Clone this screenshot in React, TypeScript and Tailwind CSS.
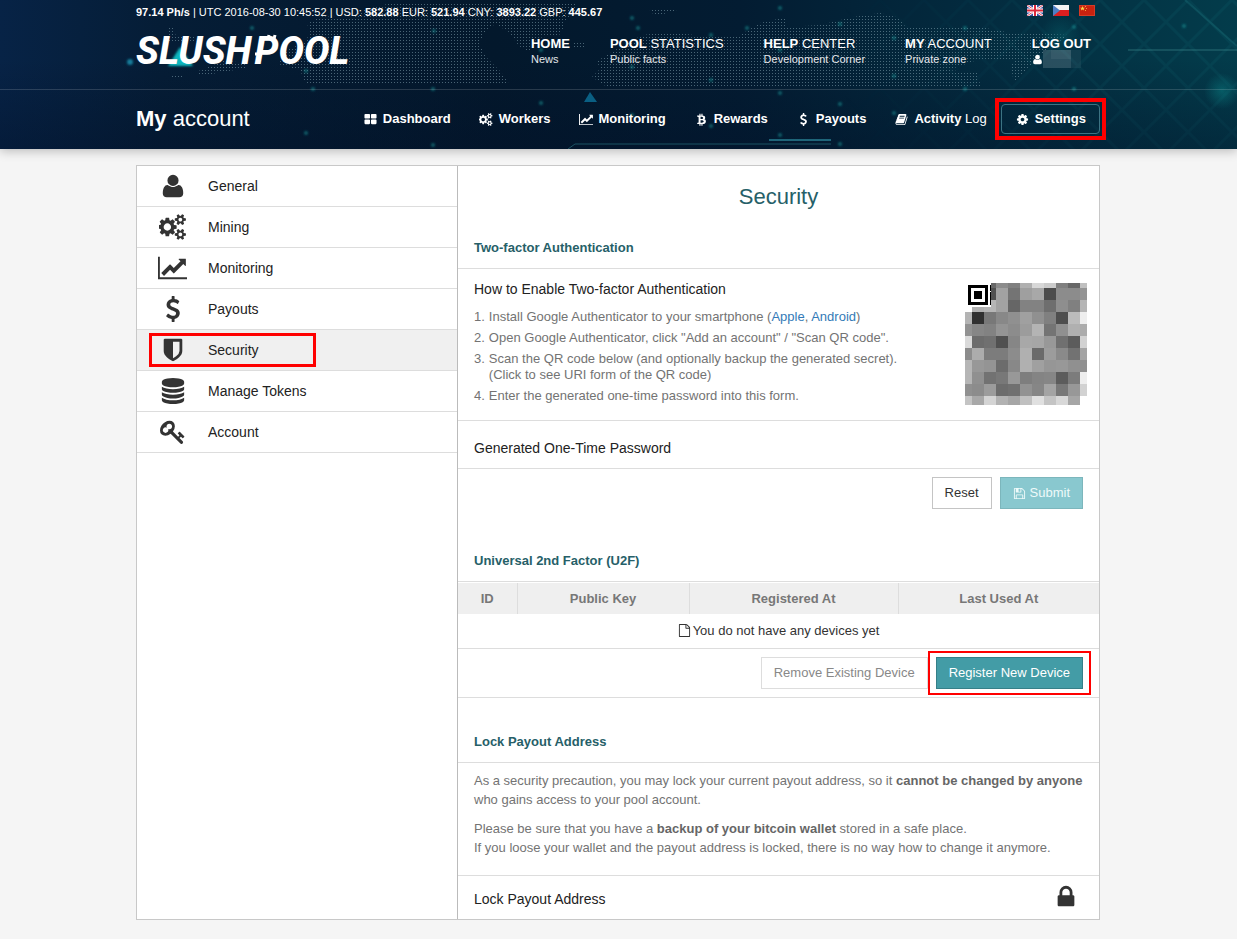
import React from 'react';

interface Glyph {
  width: number;
  d: string;
}

const glyphs: Record<string, Glyph> = {
  user: {
    width: 1792,
    d: 'M1600 1405q0 120-73 189.5t-194 69.5h-874q-121 0-194-69.5t-73-189.5q0-53 3.5-103.5t14-109 26.5-108.5 43-97.5 62-81 85.5-53.5 111.5-20q9 0 42 21.5t74.5 48 108 48 133.5 21.5 133.5-21.5 108-48 74.5-48 42-21.5q61 0 111.5 20t85.5 53.5 62 81 43 97.5 26.5 108.5 14 109 3.5 103.5zm-320-893q0 159-112.5 271.5t-271.5 112.5-271.5-112.5-112.5-271.5 112.5-271.5 271.5-112.5 271.5 112.5 112.5 271.5z',
  },
  cog: {
    width: 1792,
    d: 'M1152 896q0-106-75-181t-181-75-181 75-75 181 75 181 181 75 181-75 75-181zm512-109v222q0 12-8 23t-20 13l-185 28q-19 54-39 91 35 50 107 138 10 12 10 25t-9 23q-27 37-99 108t-94 71q-12 0-26-9l-138-108q-44 23-91 38-16 136-29 186-7 28-36 28h-222q-14 0-24.5-8.5t-11.5-21.5l-28-184q-49-16-90-37l-141 107q-10 9-25 9-14 0-25-11-126-114-165-168-7-10-7-23 0-12 8-23 15-21 51-66.5t54-70.5q-27-50-41-99l-183-27q-13-2-21-12.5t-8-23.5v-222q0-12 8-23t19-13l186-28q14-46 39-92-40-57-107-138-10-12-10-24 0-10 9-23 26-36 98.5-107.5t94.5-71.5q13 0 26 10l138 107q44-23 91-38 16-136 29-186 7-28 36-28h222q14 0 24.5 8.5t11.5 21.5l28 184q49 16 90 37l142-107q9-9 24-9 13 0 25 10 129 119 165 170 7 8 7 22 0 12-8 23-15 21-51 66.5t-54 70.5q26 50 41 98l183 28q13 2 21 12.5t8 23.5z',
  },
  cogs: {
    width: 1920,
    d: 'M832 896q0-106-75-181t-181-75-181 75-75 181 75 181 181 75 181-75 75-181zm768 512q0-52-38-90t-90-38-90 38-38 90q0 53 37.5 90.5t90.5 37.5 90.5-37.5 37.5-90.5zm0-1024q0-52-38-90t-90-38-90 38-38 90q0 53 37.5 90.5t90.5 37.5 90.5-37.5 37.5-90.5zm-384 421v185q0 10-7 19.5t-16 10.5l-155 24q-11 35-32 76 34 48 90 115 7 11 7 20 0 12-7 19-23 30-82.5 89.5t-78.5 59.5q-11 0-21-7l-115-90q-37 19-77 31-11 108-23 155-7 24-30 24h-186q-11 0-20-7.5t-10-17.5l-23-153q-34-10-75-31l-118 89q-7 7-20 7-11 0-21-8-144-133-144-160 0-9 7-19 10-14 41-53t47-61q-23-44-35-82l-152-24q-10-1-17-9.5t-7-19.5v-185q0-10 7-19.5t16-10.5l155-24q11-35 32-76-34-48-90-115-7-11-7-20 0-12 7-20 22-30 82-89t79-59q11 0 21 7l115 90q34-18 77-32 11-108 23-154 7-24 30-24h186q11 0 20 7.5t10 17.5l23 153q34 10 75 31l118-89q8-7 20-7 11 0 21 8 144 133 144 160 0 8-7 19-12 16-42 54t-45 60q23 48 34 82l152 23q10 2 17 10.5t7 19.5zm640 533v140q0 16-149 31-12 27-30 52 51 113 51 138 0 4-4 7-122 71-124 71-8 0-46-47t-52-68q-20 2-30 2t-30-2q-14 21-52 68t-46 47q-2 0-124-71-4-3-4-7 0-25 51-138-18-25-30-52-149-15-149-31v-140q0-16 149-31 13-29 30-52-51-113-51-138 0-4 4-7 4-2 35-20t59-34 30-16q8 0 46 46.5t52 67.5q20-2 30-2t30 2q51-71 92-112l6-2q4 0 124 70 4 3 4 7 0 25-51 138 17 23 30 52 149 15 149 31zm0-1024v140q0 16-149 31-12 27-30 52 51 113 51 138 0 4-4 7-122 71-124 71-8 0-46-47t-52-68q-20 2-30 2t-30-2q-14 21-52 68t-46 47q-2 0-124-71-4-3-4-7 0-25 51-138-18-25-30-52-149-15-149-31v-140q0-16 149-31 13-29 30-52-51-113-51-138 0-4 4-7 4-2 35-20t59-34 30-16q8 0 46 46.5t52 67.5q20-2 30-2t30 2q51-71 92-112l6-2q4 0 124 70 4 3 4 7 0 25-51 138 17 23 30 52 149 15 149 31z',
  },
  chart: {
    width: 2048,
    d: 'M2048 1536v128h-2048v-1536h128v1408h1920zm-128-1248v435q0 21-19.5 29.5t-35.5-7.5l-121-121-633 633q-10 10-23 10t-23-10l-233-233-416 416-192-192 585-585q10-10 23-10t23 10l233 233 464-464-121-121q-16-16-7.5-35.5t29.5-19.5h435q14 0 23 9t9 23z',
  },
  usd: {
    width: 1792,
    d: 'M1362 1185q0 153-99.5 263.5t-258.5 136.5v175q0 14-9 23t-23 9h-135q-13 0-22.5-9.5t-9.5-22.5v-175q-66-9-127.5-31t-101.5-44.5-74-48-46.5-37.5-17.5-18q-17-21-2-41l103-135q7-10 23-12 15-2 24 9l2 2q113 99 243 125 37 8 74 8 81 0 142.5-43t61.5-122q0-28-15-53t-33.5-42-58.5-37.5-66-32-80-32.5q-39-16-61.5-25t-61.5-26.5-62.5-31-56.5-35.5-53.5-42.5-43.5-49-35.5-58-21-66.5-8.5-78q0-138 98-242t255-134v-180q0-13 9.5-22.5t22.5-9.5h135q14 0 23 9t9 23v176q57 6 110.5 23t87 33.5 63.5 37.5 39 29 15 14q17 18 5 38l-81 146q-8 15-23 16-14 3-27-7-3-3-14.5-12t-39-26.5-58.5-32-74.5-26-85.5-11.5q-95 0-155 43t-60 111q0 26 8.5 48t29.5 41.5 39.5 33 56 31 60.5 27 70 27.5q53 20 81 31.5t76 35 75.5 42.5 62 50 53 63.5 31.5 76.5 13 94z',
  },
  shield: {
    width: 1792,
    d: 'M1344 960v-640h-448v1137q119-63 213-137 235-184 235-360zm192-768v768q0 86-33.5 170.5t-83 150-118 127.5-126.5 103-121 77.5-89.5 49.5-42.5 20q-12 6-26 6t-26-6q-16-7-42.5-20t-89.5-49.5-121-77.5-126.5-103-118-127.5-83-150-33.5-170.5v-768q0-26 19-45t45-19h1152q26 0 45 19t19 45z',
  },
  database: {
    width: 1792,
    d: 'M896 768q237 0 443-43t325-127v170q0 69-103 128t-280 93.5-385 34.5-385-34.5-280-93.5-103-128v-170q119 84 325 127t443 43zm0 768q237 0 443-43t325-127v170q0 69-103 128t-280 93.5-385 34.5-385-34.5-280-93.5-103-128v-170q119 84 325 127t443 43zm0-384q237 0 443-43t325-127v170q0 69-103 128t-280 93.5-385 34.5-385-34.5-280-93.5-103-128v-170q119 84 325 127t443 43zm0-1152q208 0 385 34.5t280 93.5 103 128v128q0 69-103 128t-280 93.5-385 34.5-385-34.5-280-93.5-103-128v-128q0-69 103-128t280-93.5 385-34.5z',
  },
  key: {
    width: 1792,
    d: 'M832 512q0-80-56-136t-136-56-136 56-56 136q0 42 19 83-41-19-83-19-80 0-136 56t-56 136 56 136 136 56 136-56 56-136q0-42-19-83 41 19 83 19 80 0 136-56t56-136zm851 704q0 17-49 66t-66 49q-9 0-28.5-16t-36.5-33-38.5-40-24.5-26l-96 96 220 220q28 28 28 68 0 42-39 81t-81 39q-40 0-68-28l-671-671q-176 131-365 131-163 0-265.5-102.5t-102.5-265.5q0-160 95-313t248-248 313-95q163 0 265.5 102.5t102.5 265.5q0 189-131 365l355 355 96-96q-3-3-26-24.5t-40-38.5-33-36.5-16-28.5q0-17 49-66t66-49q13 0 23 10 6 6 46 44.5t82 79.5 86.5 86 73 78 28.5 41z',
  },
  lock: {
    width: 1792,
    d: 'M640 768h512v-192q0-106-75-181t-181-75-181 75-75 181v192zm832 96v576q0 40-28 68t-68 28h-960q-40 0-68-28t-28-68v-576q0-40 28-68t68-28h32v-192q0-184 132-316t316-132 316 132 132 316v192h32q40 0 68 28t28 68z',
  },
  tiles: {
    width: 1792,
    d: 'M832 1024v384q0 52-38 90t-90 38h-512q-52 0-90-38t-38-90v-384q0-52 38-90t90-38h512q52 0 90 38t38 90zm0-768v384q0 52-38 90t-90 38h-512q-52 0-90-38t-38-90v-384q0-52 38-90t90-38h512q52 0 90 38t38 90zm896 768v384q0 52-38 90t-90 38h-512q-52 0-90-38t-38-90v-384q0-52 38-90t90-38h512q52 0 90 38t38 90zm0-768v384q0 52-38 90t-90 38h-512q-52 0-90-38t-38-90v-384q0-52 38-90t90-38h512q52 0 90 38t38 90z',
  },
  book: {
    width: 1792,
    d: 'M1703 478q40 57 18 129l-275 906q-19 64-76.5 107.5t-122.5 43.5h-923q-77 0-148.5-53.5t-99.5-131.5q-24-67-2-127 0-4 3-27t4-37q1-8-3-21.5t-3-19.5q2-11 8-21t16.5-23.5 16.5-23.5q23-38 45-91.5t30-91.5q3-10 .5-30t-.5-28q3-11 17-28t17-23q21-36 42-92t25-90q1-9-2.5-32t.5-28q4-13 22-30.5t22-22.5q19-26 42.5-84.5t27.5-96.5q1-8-3-25.5t-2-26.5q2-8 9-18t18-23 17-21q8-12 16.5-30.5t15-35 16-36 19.5-32 26.5-23.5 36-11.5 47.5 5.5l-1 3q38-9 51-9h761q74 0 114 56t18 130l-274 906q-36 119-71.5 153.5t-128.5 34.5h-869q-27 0-38 15-11 16-1 43 24 70 144 70h923q29 0 56-15.5t35-41.5l300-987q7-22 5-57 38 15 59 43zm-1064 2q-4 13 2 22.5t20 9.5h608q13 0 25.5-9.5t16.5-22.5l21-64q4-13-2-22.5t-20-9.5h-608q-13 0-25.5 9.5t-16.5 22.5zm-83 256q-4 13 2 22.5t20 9.5h608q13 0 25.5-9.5t16.5-22.5l21-64q4-13-2-22.5t-20-9.5h-608q-13 0-25.5 9.5t-16.5 22.5z',
  },
  save: {
    width: 1792,
    d: 'M512 1536h768v-384h-768v384zm896 0h128v-896q0-14-10-38.5t-20-34.5l-281-281q-10-10-34-20t-39-10v416q0 40-28 68t-68 28h-576q-40 0-68-28t-28-68v-416h-128v1280h128v-416q0-40 28-68t68-28h832q40 0 68 28t28 68v416zm-384-928v-320q0-13-9.5-22.5t-22.5-9.5h-192q-13 0-22.5 9.5t-9.5 22.5v320q0 13 9.5 22.5t22.5 9.5h192q13 0 22.5-9.5t9.5-22.5zm640 32v928q0 40-28 68t-68 28h-1344q-40 0-68-28t-28-68v-1344q0-40 28-68t68-28h928q40 0 88 20t76 48l280 280q28 28 48 76t20 88z',
  },
  file: {
    width: 1792,
    d: 'M1596 380q28 28 48 76t20 88v1152q0 40-28 68t-68 28h-1344q-40 0-68-28t-28-68v-1600q0-40 28-68t68-28h896q40 0 88 20t76 48zm-444-244v376h376q-10-29-22-41l-313-313q-12-12-41-22zm384 1528v-1024h-416q-40 0-68-28t-28-68v-416h-768v1536h1280z',
  },
  btc: {
    width: 1792,
    d: 'M1408 618q18 182-131 258 117 28 175 103t45 214q-7 71-32.5 125t-64.5 89-97 58.5-121.5 34.5-145.5 15v255h-154v-251q-80 0-122-1v252h-154v-255q-18 0-54-.5t-55-.5h-200l31-183h111q50 0 58-51v-402h16q-6-1-16-1v-287q-13-68-89-68h-111v-164l212 1q64 0 97-1v-252h154v247q82-2 122-2v-245h154v252q79 7 140 22.5t113 45 82.5 78 36.5 114.5zm-215 545q0-36-15-64t-37-46-57.5-30.5-65.5-18.5-74-9-69-3-64.5 1-47.5 1v338q8 0 37 .5t48 .5 53-1.5 58.5-4 57-8.5 55.5-14 47.5-21 39.5-30 24.5-40 9.5-51zm-71-476q0-33-12.5-58.5t-30.5-42-48-28-55-16.5-61.5-8-58-2.5-54 1-39.5.5v307q5 0 34.5.5t46.5 0 50-2 55-5.5 51.5-11 48.5-18.5 37-27 27-38.5 9-51z',
  },
};

const Icon: React.FC<{ name: string; className: string }> = ({ name, className }) => (
  <svg
    viewBox={`0 0 ${glyphs[name].width} 1792`}
    className={`shrink-0 ${className}`}
    fill="currentColor"
    aria-hidden="true"
  >
    <path d={glyphs[name].d} />
  </svg>
);

const sparks = [
  [252, 28], [434, 31], [306, 71], [313, 89], [433, 89], [306, 133], [433, 145], [541, 50],
  [632, 18], [638, 28], [711, 35], [711, 80], [632, 67], [780, 8], [747, 28], [780, 50],
  [780, 93], [541, 103], [780, 135], [711, 126], [632, 115], [840, 24], [840, 104], [840, 144],
  [894, 38], [894, 76], [894, 113], [965, 28], [965, 89], [1074, 27], [1074, 89], [1184, 26],
];

const HeaderBackdrop: React.FC = () => (
  <svg
    className="absolute inset-0 w-full h-full"
    viewBox="0 0 1237 149"
    preserveAspectRatio="xMidYMin slice"
    aria-hidden="true"
  >
    <defs>
      <linearGradient id="sea" x1="0" y1="0" x2="1" y2="0">
        <stop offset="0" stopColor="#072346" />
        <stop offset="0.13" stopColor="#051d36" />
        <stop offset="0.4" stopColor="#03182c" />
        <stop offset="0.6" stopColor="#031c32" />
        <stop offset="0.78" stopColor="#032a3e" />
        <stop offset="1" stopColor="#033c4b" />
      </linearGradient>
      <linearGradient id="fade" x1="0" y1="0" x2="0" y2="1">
        <stop offset="0.4" stopColor="#021028" stopOpacity="0" />
        <stop offset="1" stopColor="#021028" stopOpacity="0.4" />
      </linearGradient>
      <linearGradient id="meshFade" x1="0" y1="0" x2="1" y2="0">
        <stop offset="0.68" stopColor="#000" />
        <stop offset="0.9" stopColor="#fff" />
      </linearGradient>
      <mask id="meshMask">
        <rect width="1237" height="149" fill="url(#meshFade)" />
      </mask>
      <radialGradient id="glow">
        <stop offset="0" stopColor="#0fb5b0" stopOpacity="0.3" />
        <stop offset="1" stopColor="#0fb5b0" stopOpacity="0" />
      </radialGradient>
      <pattern id="dots" width="3" height="3" patternUnits="userSpaceOnUse">
        <rect x="1" y="1" width="1" height="1" fill="#8fb0bb" fillOpacity="0.5" />
      </pattern>
      <pattern id="mesh" width="44" height="44" patternUnits="userSpaceOnUse">
        <path d="M0 0L44 44M44 0L0 44" stroke="#1b8a94" strokeOpacity="0.1" strokeWidth="3" />
      </pattern>
      <filter id="soft" x="-50%" y="-50%" width="200%" height="200%">
        <feGaussianBlur stdDeviation="1" />
      </filter>
    </defs>
    <rect width="1237" height="149" fill="url(#sea)" />
    <rect width="1237" height="149" fill="url(#mesh)" mask="url(#meshMask)" />
    <rect width="1237" height="149" fill="url(#fade)" />

    {/* World map */}
    <g fill="url(#dots)">
      <path d="M168 28h6v6l10 4 10-2v6h-26zM170 76h12v3h-12zM196 72l30-12 20 4v4l-46 8z" />
      <path d="M307 24l14-8 30 2 12-8 32-8h182v8l-12 12-4 12-6 2-18 2-8 14-10-6-10-14-14-8-10 8-6 12 8 14 14 14 8 12H306l-6-14-22-6 8-14 20-8 4-12z" />
      <path d="M648 8h34l-8 3-14 4h-6zM572 42h14v5h-14z" />
      <path d="M607 87l-15-10 8-8-3-8 30-18 16-8 24-3 46 5 27-2 20-12 27-6v10l33-2 33-8 27-4 20 5 6 10 74-1 26 5 64 3-20 12-20 20-16 16-3-16 3-7-37 0-28 10 28 3 4 14z" />
    </g>

    {sparks.map(([x, y]) => (
      <circle key={`${x}-${y}`} cx={x} cy={y} r="2" fill="#14a3a3" fillOpacity="0.5" filter="url(#soft)" />
    ))}
    <circle cx="130" cy="62" r="3" fill="#1695b4" fillOpacity="0.8" filter="url(#soft)" />
    <path d="M168 66L180 47L193 66Z" fill="#0db5bd" filter="url(#soft)" />
    <path d="M584 102L590 92L597 102Z" fill="#0a5f83" />
    <path d="M568 149L575 144H831" stroke="#1b5262" fill="none" />
    <path d="M769 140H831" stroke="#26788c" strokeOpacity="0.8" strokeWidth="2" />
    <path d="M1128 50H1237" stroke="#3f8f93" strokeOpacity="0.3" strokeWidth="2" />
    <path d="M1185 0L1237 46" stroke="#2d949b" strokeOpacity="0.2" strokeWidth="2" />
    <circle cx="1222" cy="91" r="18" fill="url(#glow)" />
    <circle cx="1060" cy="35" r="20" fill="url(#glow)" fillOpacity="0.5" />
  </svg>
);

const FlagGB: React.FC = () => (
  <svg viewBox="0 0 16 11" className="w-4 h-[11px]" aria-hidden="true">
    <rect width="16" height="11" fill="#3a4f9e" />
    <path d="M0 0L16 11M16 0L0 11" stroke="#fff" strokeWidth="2.4" />
    <path d="M0 0L16 11M16 0L0 11" stroke="#d8364a" strokeWidth="0.9" />
    <path d="M8 0V11M0 5.5H16" stroke="#fff" strokeWidth="4" />
    <path d="M8 0V11M0 5.5H16" stroke="#dc2a3c" strokeWidth="2" />
  </svg>
);

const FlagCZ: React.FC = () => (
  <svg viewBox="0 0 16 11" className="w-4 h-[11px]" aria-hidden="true">
    <rect width="16" height="6" fill="#f4f4f4" />
    <rect y="5" width="16" height="6" fill="#dd1f20" />
    <path d="M0 0L7 5.5L0 11Z" fill="#4f7fc4" />
  </svg>
);

const FlagCN: React.FC = () => (
  <svg viewBox="0 0 16 11" className="w-4 h-[11px]" aria-hidden="true">
    <rect width="16" height="11" fill="#c9220f" />
    <rect x="0.5" y="0.5" width="15" height="10" fill="none" stroke="#d63a26" />
    <path d="M3.5 1l.7 1.7H6L4.600 3.800l.5 1.800-1.600-1-1.600 1 .5-1.800L1 2.700h1.800z" fill="#f8d648" />
    <path d="M6 1h1v1H6zM7 3h1v1H7zM6 5h1v1H6z" fill="#f0a040" />
  </svg>
);

const languages = [
  { label: 'English', flag: <FlagGB /> },
  { label: 'Czech', flag: <FlagCZ /> },
  { label: 'Chinese', flag: <FlagCN /> },
];

const mainNav = [
  { strong: 'HOME', rest: '', sub: 'News' },
  { strong: 'POOL', rest: ' STATISTICS', sub: 'Public facts' },
  { strong: 'HELP', rest: ' CENTER', sub: 'Development Corner' },
  { strong: 'MY', rest: ' ACCOUNT', sub: 'Private zone' },
];

const subNav = [
  { icon: 'tiles', strong: 'Dashboard', rest: '' },
  { icon: 'cogs', strong: 'Workers', rest: '' },
  { icon: 'chart', strong: 'Monitoring', rest: '' },
  { icon: 'btc', strong: 'Rewards', rest: '' },
  { icon: 'usd', strong: 'Payouts', rest: '' },
  { icon: 'book', strong: 'Activity', rest: ' Log' },
  { icon: 'cog', strong: 'Settings', rest: '', active: true },
];

const sideNav = [
  { icon: 'user', label: 'General' },
  { icon: 'cogs', label: 'Mining' },
  { icon: 'chart', label: 'Monitoring' },
  { icon: 'usd', label: 'Payouts' },
  { icon: 'shield', label: 'Security', active: true },
  { icon: 'database', label: 'Manage Tokens' },
  { icon: 'key', label: 'Account' },
];

const Logo: React.FC = () => (
  <a
    href="#"
    className="flex gap-[3px] font-['Roboto',sans-serif] font-extrabold italic text-[38px] leading-10"
  >
    <span>SLUSH</span>
    <span className="relative">
      POOL
      {/* Bitcoin strokes on the P */}
      <svg
        viewBox="0 0 30 32"
        className="absolute left-0 top-0 w-[30px] h-8"
        fill="none"
        stroke="#fff"
        strokeWidth="3"
        aria-hidden="true"
      >
        <path d="M13 8L14 4M19 8L20 4M0 23H7" />
      </svg>
    </span>
  </a>
);

const Header: React.FC = () => (
  <header className="relative bg-[#031629] text-white shadow-[0_2px_10px_rgba(0,0,0,0.25)]">
    <HeaderBackdrop />
    <div className="relative border-b border-white/15">
      <div className="max-w-[965px] mx-auto pr-px h-[89px]">
        <div className="flex justify-between items-start pt-[5px]">
          <p className="text-[11px] leading-[14px]">
            <b>97.14 Ph/s</b> | UTC 2016-08-30 10:45:52 | USD: <b>582.88</b> EUR: <b>521.94</b> CNY: <b>3893.22</b> GBP:{' '}
            <b>445.67</b>
          </p>
          <div className="flex gap-[10px] pr-[5px]">
            {languages.map((language) => (
              <a key={language.label} href="#" aria-label={language.label}>
                {language.flag}
              </a>
            ))}
          </div>
        </div>
        <div className="flex justify-between items-start pt-3">
          <Logo />
          <nav className="flex gap-10 pt-[5px] pr-[9px] text-[13px] leading-4">
            {mainNav.map((item) => (
              <a key={item.strong} href="#">
                <b className="font-bold">{item.strong}</b>
                {item.rest}
                <span className="block text-[11px] leading-[14px] text-gray-200">{item.sub}</span>
              </a>
            ))}
            <a href="#">
              <b className="font-bold">LOG OUT</b>
              <span className="flex items-center h-[14px]">
                <Icon name="user" className="w-[11px] h-[11px]" />
                <svg viewBox="0 0 38 18" className="w-[38px] h-[18px]" aria-hidden="true">
                  <path d="M0 0H38V18H0Z" fill="#fff" fillOpacity="0.06" />
                  <path d="M0 0H28V18H0Z" fill="#fff" fillOpacity="0.1" />
                  <path d="M8 0H28V9H8Z" fill="#fff" fillOpacity="0.06" />
                </svg>
              </span>
            </a>
          </nav>
        </div>
      </div>
    </div>

    <div className="relative max-w-[965px] mx-auto pr-px pb-px h-[59px] flex justify-between items-center">
      <h1 className="text-[22px] leading-7">
        <b>My</b> account
      </h1>
      <nav className="flex text-[13px] leading-7">
        {subNav.map((item) => (
          <a
            key={item.strong}
            href="#"
            className={`relative flex items-center gap-1 pl-3 pr-[13px] border rounded ${
              item.active ? 'border-[#3c7383]' : 'border-transparent'
            }`}
          >
            <span className="w-[17px] flex justify-center">
              <Icon name={item.icon} className="h-[13px]" />
            </span>
            <span>
              <b>{item.strong}</b>
              {item.rest}
            </span>
            {item.active && <span className="absolute -inset-[7px] border-4 border-[#ff0000]"></span>}
          </a>
        ))}
      </nav>
    </div>
  </header>
);

const Sidebar: React.FC = () => (
  <nav className="w-[321px] shrink-0 border-r border-[#bbbbbb] text-sm text-[#222222]">
    {sideNav.map((item) => (
      <a
        key={item.label}
        href="#"
        className={`relative flex items-center h-[41px] border-b border-[#dddddd] ${
          item.active ? 'bg-[#f0f0f0]' : ''
        }`}
      >
        <span className="w-[71px] flex justify-center text-[#333333]">
          <Icon name={item.icon} className="h-[26px]" />
        </span>
        <span>{item.label}</span>
        {item.active && (
          <span className="absolute left-3 top-[3px] w-[167px] h-[34px] border-3 border-[#ff0000]"></span>
        )}
      </a>
    ))}
  </nav>
);

const qrShades = [
  ['fff', 'fff', '686868', '8c8c8c', '808080', 'b0b0b0', 'd8d8d8', 'cccccc', '808080', '686868', 'c0c0c0'],
  ['fff', 'fff', '505050', 'a2a2a2', '747474', '9f9f9f', 'a8a8a8', '4c4c4c', '8c8c8c', '8c8c8c', '949494'],
  ['fff', 'b0b0b0', 'b5b5b5', 'a2a2a2', '666666', '828282', '828282', '6e6e6e', '8e8e8e', '808080', 'b5b5b5'],
  ['b4b4b4', '303030', '787878', '888888', '909090', 'a0a0a0', '909090', '808080', '4e4e4e', 'bcbcbc', 'eeeeee'],
  ['929292', '868686', '828282', '949494', '8c8c8c', '9c9c9c', 'b4b4b4', '747474', '909090', 'b0b0b0', 'acacac'],
  ['dadada', '6c6c6c', '707070', '505050', '868686', 'a8a8a8', 'a6a6a6', '989898', '707070', '5c5c5c', 'd2d2d2'],
  ['8c8c8c', 'acacac', '7c7c7c', '7c7c7c', '8c8c8c', 'b0b0b0', '6a6a6a', '9c9c9c', '8a8a8a', '727272', 'a4a4a4'],
  ['b6b6b6', '989898', '949494', '6c6c6c', '888888', 'b0b0b0', 'a0a0a0', '969696', '989898', '909090', '909090'],
  ['b6b6b6', '909090', '727272', '787878', '989898', '7e7e7e', '848484', '868686', '5c5c5c', '7c7c7c', 'eeeeee'],
  ['909090', '8c8c8c', '9c9c9c', '6c6c6c', '707070', '929292', '868686', 'a4a4a4', '787878', '989898', 'd2d2d2'],
  ['c4c4c4', 'a8a8a8', 'd4d4d4', 'b2b2b2', 'a6a6a6', 'c0c0c0', 'e0e0e0', 'c4c4c4', 'd8d8d8', 'a6a6a6', 'fff'],
];

// The first row and column of the code are cut off by its edge
const QrCode: React.FC = () => (
  <svg
    viewBox="0 0 122 122"
    className="w-[122px] h-[122px] mt-px shrink-0"
    shapeRendering="crispEdges"
    role="img"
    aria-label="QR code"
  >
    {qrShades.map((row, y) =>
      row.map((shade, x) => (
        <rect key={`${x}-${y}`} x={x * 12 - 5} y={y * 12 - 7} width="12" height="12" fill={`#${shade}`} />
      ))
    )}
    <path d="M0 0H26V24H0Z" fill="#fff" />
    <path d="M25 2H26V8H25ZM25 9H26V22H25Z" fill="#000" />
    <path d="M3 2H23V22H3Z" fill="#000" />
    <path d="M6 5H20V19H6Z" fill="#fff" />
    <path d="M9 8H17V16H9Z" fill="#000" />
  </svg>
);

const SectionTitle: React.FC<{ children: React.ReactNode }> = ({ children }) => (
  <h3 className="px-4 pb-[11px] border-b border-[#dddddd] text-[13px] leading-[18px] font-bold text-[#266068]">
    {children}
  </h3>
);

const steps = [
  <>
    Install Google Authenticator to your smartphone (
    <a href="#" className="text-[#337ab7]">Apple</a>,{' '}
    <a href="#" className="text-[#337ab7]">Android</a>)
  </>,
  <>Open Google Authenticator, click "Add an account" / "Scan QR code".</>,
  <>
    Scan the QR code below (and optionally backup the generated secret).
    <br />
    (Click to see URI form of the QR code)
  </>,
  <>Enter the generated one-time password into this form.</>,
];

const Security: React.FC = () => (
  <main className="flex-1 min-w-0 text-[13px] text-[#737373]">
    <h2 className="pt-4 pb-[27px] text-center text-[22px] leading-[30px] text-[#266068]">Security</h2>

    <SectionTitle>Two-factor Authentication</SectionTitle>
    <div className="flex justify-between items-start pl-4 pr-3 pt-[13px] pb-[15px] border-b border-[#dddddd]">
      <div>
        <h4 className="text-sm leading-[14px] text-[#222222]">How to Enable Two-factor Authentication</h4>
        <ol className="pt-[13px] space-y-[5px] leading-4">
          {steps.map((step, index) => (
            <li key={index} className="flex gap-1">
              <span>{index + 1}.</span>
              <span>{step}</span>
            </li>
          ))}
        </ol>
      </div>
      <QrCode />
    </div>
    <div className="flex items-center h-12 px-4 pt-[6px] border-b border-[#dddddd] text-sm text-[#222222]">
      <label htmlFor="otp">Generated One-Time Password</label>
      <input id="otp" type="text" className="flex-1 ml-4 h-8 outline-none" />
    </div>
    <div className="flex justify-end gap-2 px-4 pt-2 pb-[43px]">
      <button type="reset" className="h-8 px-3 border border-[#c4c4c4] text-[#333333]">
        Reset
      </button>
      <button
        type="submit"
        className="flex items-center gap-1 h-8 px-3 border border-[#7cb6bc] bg-[#89c8cf] text-[#eefafa]"
      >
        <Icon name="save" className="h-[13px]" />
        Submit
      </button>
    </div>

    <SectionTitle>Universal 2nd Factor (U2F)</SectionTitle>
    <table className="w-full mt-px table-fixed border-collapse">
      <thead>
        <tr className="h-[31px] bg-[#efefef] text-[#777777]">
          <th className="w-[59px] border-r border-[#dddddd]">ID</th>
          <th className="w-[172px] border-r border-[#dddddd]">Public Key</th>
          <th className="w-[209px] border-r border-[#dddddd]">Registered At</th>
          <th>Last Used At</th>
        </tr>
      </thead>
      <tbody>
        <tr className="h-[34px] border-b border-[#dddddd] text-[#333333]">
          <td colSpan={4}>
            <span className="flex justify-center items-center gap-[2px]">
              <Icon name="file" className="h-[13px]" />
              You do not have any devices yet
            </span>
          </td>
        </tr>
      </tbody>
    </table>
    <div className="flex justify-end px-4 py-2 border-b border-[#dddddd]">
      <button type="button" className="h-8 px-3 border border-[#dddddd] text-[#888888]">
        Remove Existing Device
      </button>
      <div className="relative ml-2">
        <button type="button" className="h-8 px-3 border border-[#357f88] bg-[#439ca6] text-white">
          Register New Device
        </button>
        <span className="absolute -inset-x-2 -inset-y-[6px] border-2 border-[#ff0000] pointer-events-none"></span>
      </div>
    </div>

    <div className="pt-[35px]">
      <SectionTitle>Lock Payout Address</SectionTitle>
    </div>
    <div className="px-4 pt-2 pb-[18px] space-y-[10px] leading-[19px] border-b border-[#dddddd]">
      <p>
        As a security precaution, you may lock your current payout address, so it{' '}
        <b className="text-[#666666]">cannot be changed by anyone</b> who gains access to your pool account.
      </p>
      <p>
        Please be sure that you have a <b className="text-[#666666]">backup of your bitcoin wallet</b> stored in a safe place.
        <br />
        If you loose your wallet and the payout address is locked, there is no way how to change it anymore.
      </p>
    </div>
    <div className="flex justify-between items-center h-[43px] pl-4 pr-5 text-sm text-[#222222]">
      <span className="pt-1">Lock Payout Address</span>
      <button type="button" aria-label="Lock Payout Address" className="text-[#333333]">
        <Icon name="lock" className="h-[26px]" />
      </button>
    </div>
  </main>
);

const App: React.FC = () => {
  return (
    <div className="min-h-screen bg-[#f5f5f5] font-['Liberation_Sans',Arial,sans-serif]">
      <Header />
      <div className="max-w-[965px] mx-auto pr-px pt-4 pb-5">
        <div className="flex border border-[#c8c8c8] bg-white">
          <Sidebar />
          <Security />
        </div>
      </div>
    </div>
  );
};

export default App;
